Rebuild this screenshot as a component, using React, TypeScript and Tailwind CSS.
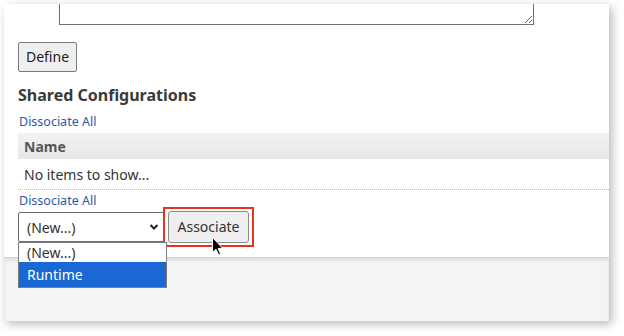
import React from "react";

const font = { fontFamily: '"Noto Sans", "Open Sans", sans-serif' };

export default function App() {
  return (
    <div className="w-[624px] h-[336px] bg-white overflow-hidden" style={font}>
      <div className="relative ml-[4px] mt-[4px] w-[605px] h-[317px] flex flex-col shadow-[3px_3px_9px_rgba(0,0,0,0.28)]">
        <div className="relative h-[253px] bg-white pl-[14px] flex flex-col">
          <textarea
            readOnly
            className="ml-[41px] w-[475px] h-[21px] border border-t-0 border-[#707070] bg-white resize-y outline-none"
          />
          <button className="mt-[17px] h-[30px] w-[59px] rounded-[2px] border border-[#7a7a7a] bg-[#efefef] text-[14px] text-[#222] leading-none">
            Define
          </button>
          <h2 className="mt-[13px] h-[20px] text-[16px] leading-[20px] font-bold text-[#3a3a3a]">
            Shared Configurations
          </h2>
          <a className="mt-[9px] ml-[1px] h-[16px] text-[12.5px] leading-[16px] text-[#2b5aa3] self-start">
            Dissociate All
          </a>
          <div className="mt-[3px] h-[26px] bg-gradient-to-b from-[#f2f2f2] to-[#e7e7e7] flex items-center pl-[6px] text-[14px] font-bold text-[#555]">
            Name
          </div>
          <div className="h-[31px] border-b border-dotted border-[#bdbdbd] flex items-center pl-[6px] text-[14px] text-[#333]">
            No items to show...
          </div>
          <a className="mt-[3px] ml-[1px] h-[16px] text-[12.5px] leading-[16px] text-[#2b5aa3] self-start">
            Dissociate All
          </a>
          <div className="mt-[2px] h-[32px] flex items-center">
            <div className="relative">
              <div className="w-[147px] h-[30px] border border-[#6f6f6f] rounded-[2px] bg-white flex items-center justify-between pl-[8px] pr-[5px] text-[14px] text-[#333]">
                <span>(New...)</span>
                <svg width="10" height="8" viewBox="0 0 10 8">
                  <path d="M1.5 2 L5 5.5 L8.5 2" fill="none" stroke="#222" strokeWidth="2" />
                </svg>
              </div>
              <div className="absolute left-0 top-[30px] z-10 w-[149px] h-[46px] border border-[#7d7d7d] bg-white flex flex-col text-[14px]">
                <div className="h-[19px] flex items-center pl-[8px] text-[#333]">(New...)</div>
                <div className="flex-1 flex items-center pl-[8px] bg-[#1a68d4] text-white">Runtime</div>
              </div>
            </div>
            <div className="relative ml-[3px]">
              <button className="h-[32px] w-[81px] rounded-[3px] border border-[#8d8d8d] bg-[#efefef] text-[14px] text-[#333] leading-none">
                Associate
              </button>
              <div className="absolute -left-[5px] -right-[5px] -top-[4px] -bottom-[4px] border-2 border-[#e8321e] pointer-events-none" />
              <svg
                className="absolute left-[44px] top-[26px] z-20"
                width="12"
                height="19"
                viewBox="0 0 12 19"
              >
                <path
                  d="M0.5 0.5 L0.5 15.5 L4 12.2 L6.6 18 L8.6 17.1 L6.1 11.4 L10.8 11.4 Z"
                  fill="#000"
                  stroke="#fff"
                  strokeWidth="1"
                />
              </svg>
            </div>
          </div>
        </div>
        <div className="flex-1 bg-[#f4f4f4] border-t border-[#d2d2d2] shadow-[inset_0_3px_3px_rgba(0,0,0,0.08)]" />
      </div>
    </div>
  );
}
